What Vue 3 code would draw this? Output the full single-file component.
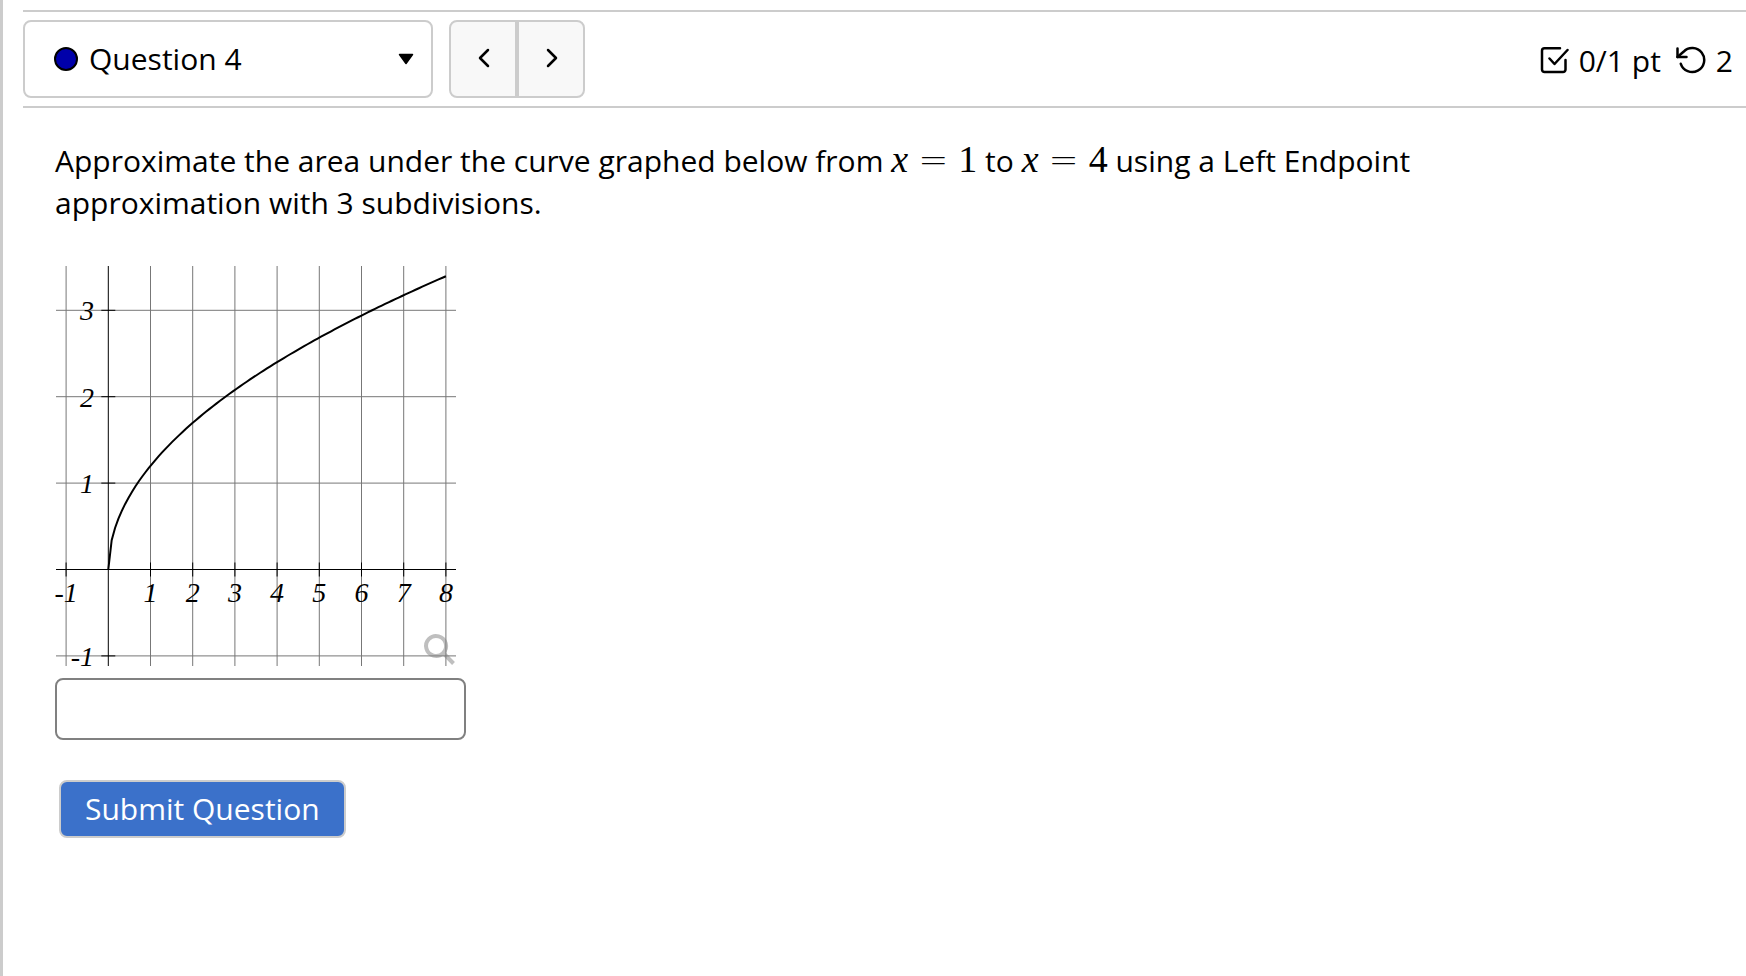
<script setup>
import { ref } from 'vue'

const answer = ref('')

const size = 400
const origin = { x: 52.3, y: 303.5 }
const unit = { x: 42.2, y: 86.4 }
const px = (x) => origin.x + x * unit.x
const py = (y) => origin.y - y * unit.y

const xTicks = [-1, 1, 2, 3, 4, 5, 6, 7, 8]
const yTicks = [-1, 1, 2, 3]

const steps = 100
const curve = Array.from({ length: steps + 1 }, (_, i) => {
  const x = (8 * i) / steps
  return `${px(x).toFixed(2)},${py(1.2 * Math.sqrt(x)).toFixed(2)}`
}).join(' ')
</script>

<template>
  <div class="page">
    <header class="bar">
      <button class="picker" type="button" aria-haspopup="listbox">
        <span class="dot"></span>
        <span class="picker-label">Question 4</span>
        <svg class="caret" width="16" height="12" viewBox="0 0 16 12" aria-hidden="true">
          <path d="M1.500 1.500h13L8 10.500z" fill="#000" stroke="#000" stroke-width="1.500" stroke-linejoin="round" />
        </svg>
      </button>
      <nav class="steps" aria-label="Question navigation">
        <button type="button" aria-label="Previous question">
          <svg width="14" height="24" viewBox="0 0 14 24"><path d="M12 3L4 11l8 8" /></svg>
        </button>
        <button type="button" aria-label="Next question">
          <svg width="14" height="24" viewBox="0 0 14 24"><path d="M4 3L12 11L4 19" /></svg>
        </button>
      </nav>
      <div class="status">
        <svg width="30" height="30" viewBox="0 0 30 30" aria-hidden="true">
          <path d="M21 2.300H5.500A2.500 2.500 0 0 0 3 4.800V23.500a2.500 2.500 0 0 0 2.500 2.500H24a2.500 2.500 0 0 0 2.500-2.500V14" />
          <path d="M10.500 12.500L15.500 18L28.500 4" />
        </svg>
        <span class="points">0/1 pt</span>
        <svg width="30" height="30" viewBox="0 0 30 30" aria-hidden="true">
          <path d="M1.500 2.500V11H10.500" />
          <path d="M1.500 11L7.500 5.800A12 12 0 1 1 4.800 17.800" />
        </svg>
        <span>2</span>
      </div>
    </header>

    <main class="question">
      <p class="prompt">
        Approximate the area under the curve graphed below from
        <span class="math"><i>x</i><span class="eq">=</span><span>1</span></span> to
        <span class="math"><i>x</i><span class="eq">=</span><span>4</span></span> using a Left Endpoint
        approximation with 3 subdivisions.
      </p>

      <svg class="graph" :width="size" :height="size" :viewBox="`0 0 ${size} ${size}`" role="img" aria-label="Graph of an increasing curve from 0 to 8">
        <g class="grid">
          <line v-for="x in xTicks" :key="x" :x1="px(x)" :x2="px(x)" y1="0" :y2="size" />
          <line v-for="y in yTicks" :key="y" :y1="py(y)" :y2="py(y)" x1="0" :x2="size" />
        </g>
        <g class="axes">
          <line :x1="px(0)" :x2="px(0)" y1="0" :y2="size" />
          <line :y1="py(0)" :y2="py(0)" x1="0" :x2="size" />
          <line v-for="x in xTicks" :key="x" :x1="px(x)" :x2="px(x)" :y1="py(0) - 7" :y2="py(0) + 7" />
          <line v-for="y in yTicks" :key="y" :y1="py(y)" :y2="py(y)" :x1="px(0) - 7" :x2="px(0) + 7" />
        </g>
        <polyline class="curve" :points="curve" />
        <g class="labels">
          <text v-for="x in xTicks" :key="x" :x="px(x)" y="336" text-anchor="middle">{{ x }}</text>
          <text v-for="y in yTicks" :key="y" x="38" :y="py(y) + 10" text-anchor="end">{{ y }}</text>
        </g>
        <g class="lens">
          <path d="M387.100 387.100A10 10 0 1 1 387.200 387L397.500 397.500" />
        </g>
      </svg>

      <input v-model="answer" class="answer" type="text" aria-label="Answer" />
      <button class="submit" type="button">Submit Question</button>
    </main>
  </div>
</template>

<style>
body {
  margin: 0;
  background: #fff;
}
</style>

<style scoped>
.page {
  box-sizing: border-box;
  min-height: 100vh;
  padding: 10px 0 0 20px;
  border-left: 3px solid #ccc;
  color: #000;
  font: 30px/42px "Open Sans", "Noto Sans", sans-serif;
}
button {
  font: inherit;
  color: inherit;
  cursor: pointer;
}
.bar {
  display: flex;
  align-items: center;
  padding: 8px 13px 8px 0;
  border-top: 2px solid #ccc;
  border-bottom: 2px solid #ccc;
}
.picker {
  box-sizing: border-box;
  display: flex;
  align-items: center;
  width: 410px;
  height: 78px;
  padding: 0 17px 0 29px;
  border: 2px solid #ccc;
  border-radius: 8px;
  background: #fff;
}
.dot {
  box-sizing: border-box;
  width: 24px;
  height: 24px;
  margin-right: 11px;
  border: 2px solid #000;
  border-radius: 50%;
  background: #00a;
}
.caret {
  margin-left: auto;
}
.steps {
  display: flex;
  margin-left: 16px;
}
.steps button {
  box-sizing: border-box;
  display: flex;
  align-items: center;
  justify-content: center;
  width: 68px;
  height: 78px;
  padding: 0;
  border: 2px solid #ccc;
  background: #f8f8f8;
}
.steps button:first-child {
  border-radius: 8px 0 0 8px;
}
.steps button:last-child {
  border-radius: 0 8px 8px 0;
}
.steps svg,
.status svg {
  fill: none;
  stroke: #000;
  stroke-width: 2.5;
  stroke-linecap: round;
  stroke-linejoin: round;
}
.status {
  display: flex;
  align-items: center;
  gap: 10px;
  margin-left: auto;
  padding-top: 4px;
}
.points {
  margin-right: 5px;
}
.question {
  display: flex;
  flex-direction: column;
  align-items: flex-start;
  padding: 32px 32px 0;
}
.prompt {
  max-width: 1480px;
  margin: 0;
}
.math {
  font: 38px/36px "Liberation Serif", serif;
  white-space: nowrap;
}
.eq {
  margin: 0 10px;
  font-family: "DejaVu Sans Light", "DejaVu Sans", sans-serif;
  font-size: 36px;
  font-weight: 200;
}
.graph {
  display: block;
  margin: 42px 0 12px 1px;
  overflow: visible;
}
.grid line {
  stroke: #777;
  stroke-width: 1;
}
.axes line {
  stroke: #000;
  stroke-width: 1;
}
.curve {
  fill: none;
  stroke: #000;
  stroke-width: 2;
}
.labels {
  font: italic 28px "Liberation Serif", serif;
}
.lens {
  fill: none;
  stroke: #808080;
  stroke-width: 4;
  opacity: 0.5;
}
.answer {
  box-sizing: border-box;
  width: 411px;
  max-width: 100%;
  height: 62px;
  padding: 0 12px;
  border: 2px solid #808080;
  border-radius: 8px;
  background: #fff;
  font: inherit;
}
.submit {
  margin: 40px 0 0 4px;
  padding: 6px 24px;
  border: 2px solid #ccc;
  border-radius: 8px;
  background: #3b71ca;
  color: #fff;
}
</style>
